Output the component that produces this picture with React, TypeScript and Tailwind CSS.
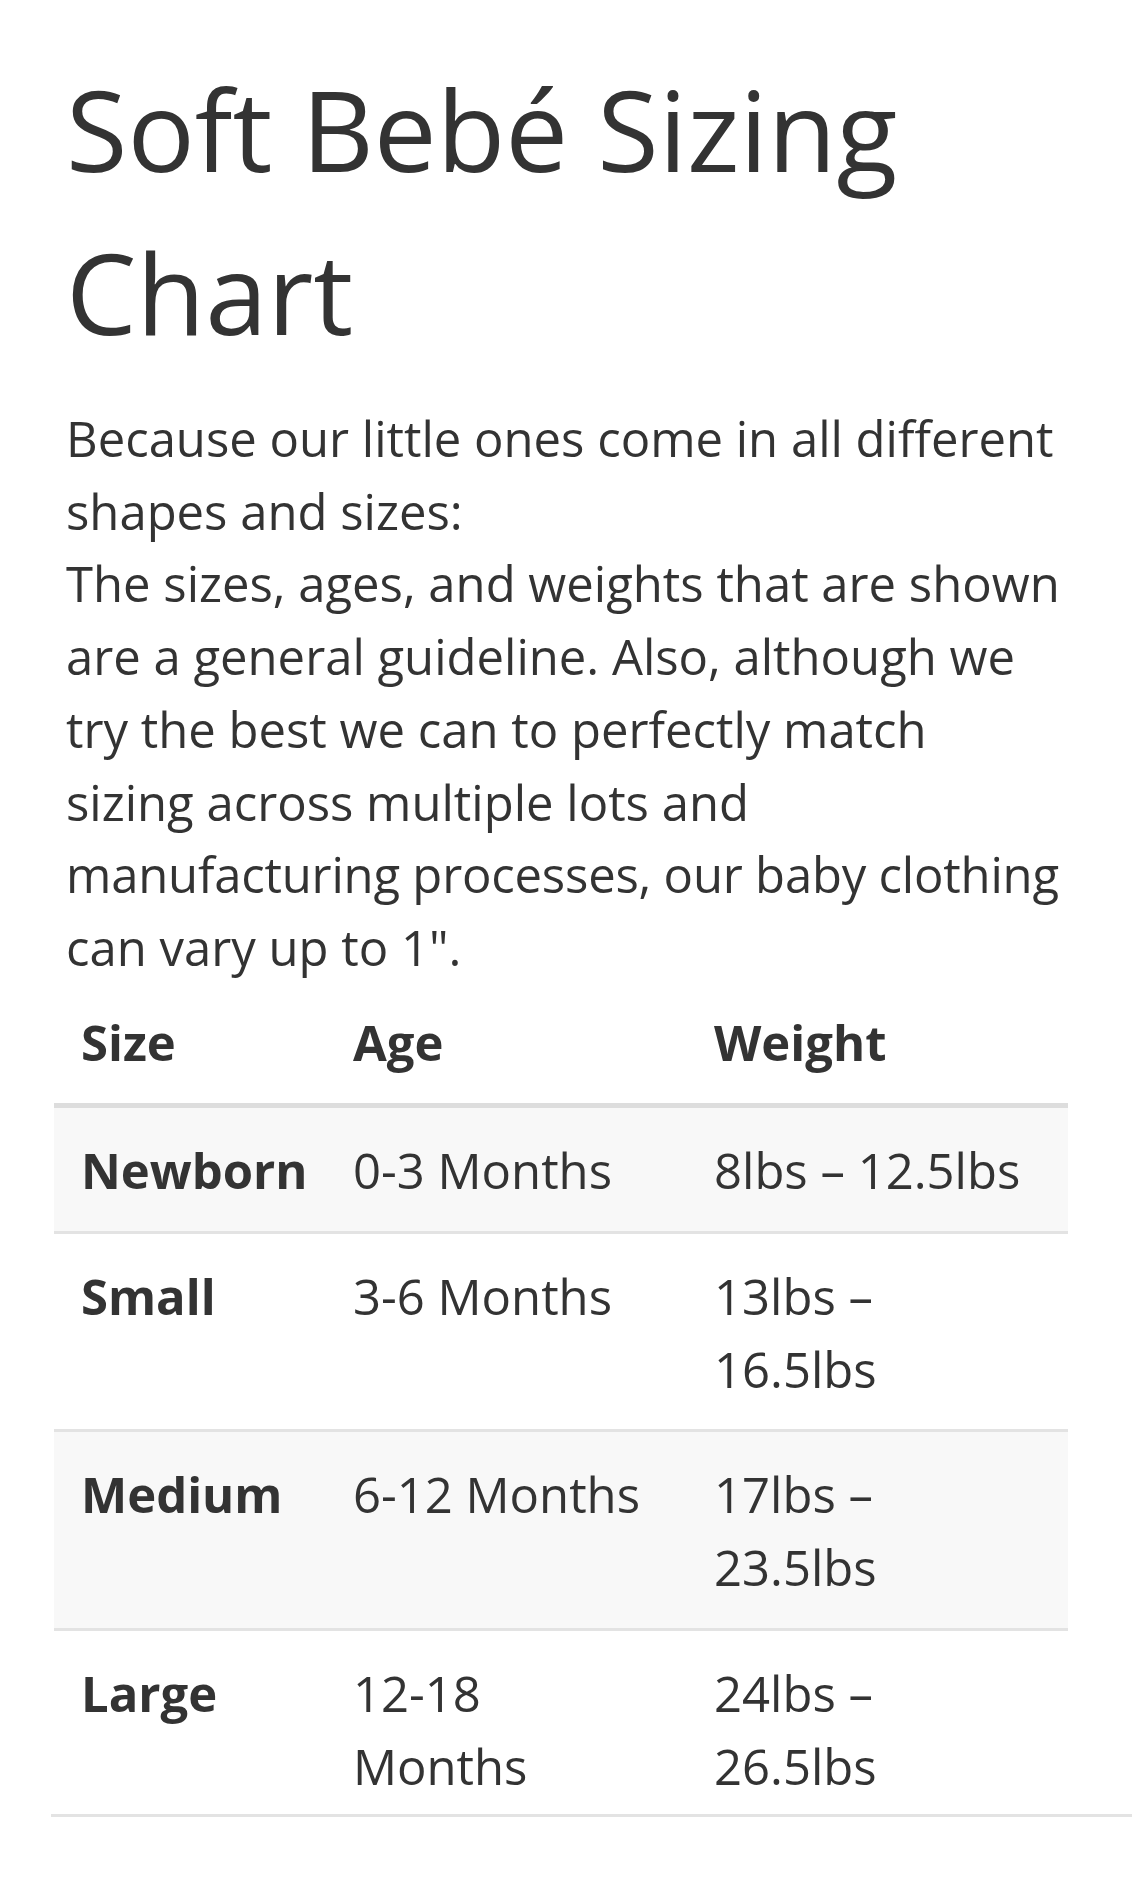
const rows = [
  { size: 'Newborn', age: '0-3 Months', weight: '8lbs – 12.5lbs' },
  { size: 'Small', age: '3-6 Months', weight: '13lbs – 16.5lbs' },
  { size: 'Medium', age: '6-12 Months', weight: '17lbs – 23.5lbs' },
  { size: 'Large', age: '12-18 Months', weight: '24lbs – 26.5lbs' },
]

export default function App() {
  return (
    <div
      className="min-h-screen bg-white text-[#333333] pl-[54px] pt-[47px]"
      style={{ fontFamily: '"Open Sans", "Noto Sans", sans-serif' }}
    >
      <div className="pl-[12px] w-[1040px]">
        <h1 className="text-[112px] leading-[163px] font-normal">Soft Bebé Sizing Chart</h1>
        <p className="mt-[29px] text-[49px] leading-[72.7px]">
          Because our little ones come in all different
          <br />
          shapes and sizes:
          <br />
          The sizes, ages, and weights that are shown
          <br />
          are a general guideline. Also, although we
          <br />
          try the best we can to perfectly match
          <br />
          sizing across multiple lots and
          <br />
          <span className="tracking-[-0.2px]">manufacturing processes, our baby clothing</span>
          <br />
          can vary up to 1".
        </p>
      </div>

      <table className="table-fixed w-[1014px] border-collapse text-[49px] leading-[72.7px]">
        <thead>
          <tr className="border-b-[5px] border-[#dddddd]">
            <th className="w-[272px] text-left font-bold pl-[27px] pt-[22px] pb-[25px]">Size</th>
            <th className="w-[361px] text-left font-bold pl-[27px] pt-[22px] pb-[25px]">Age</th>
            <th className="w-[381px] text-left font-bold pl-[27px] pr-[27px] pt-[22px] pb-[25px]">Weight</th>
          </tr>
        </thead>
        <tbody>
          {rows.map((r, i) => {
            const last = i === rows.length - 1
            return (
              <tr
                key={r.size}
                className={`${i % 2 === 0 ? 'bg-[#f8f8f8]' : 'bg-white'} ${last ? '' : 'border-b-[3px] border-[#e3e3e3]'}`}
              >
                <td className={`align-top font-bold pl-[27px] pt-[26px] ${last ? 'pb-[12px]' : 'pb-[24px]'}`}>
                  {r.size}
                </td>
                <td className={`align-top pl-[27px] pr-[27px] pt-[26px] ${last ? 'pb-[12px]' : 'pb-[24px]'}`}>
                  {r.age}
                </td>
                <td className={`align-top pl-[27px] pr-[27px] pt-[26px] ${last ? 'pb-[12px]' : 'pb-[24px]'}`}>
                  {r.weight}
                </td>
              </tr>
            )
          })}
        </tbody>
      </table>
      <div className="ml-[-3px] w-[1081px] h-[3px] bg-[#e3e3e3]" />
    </div>
  )
}
